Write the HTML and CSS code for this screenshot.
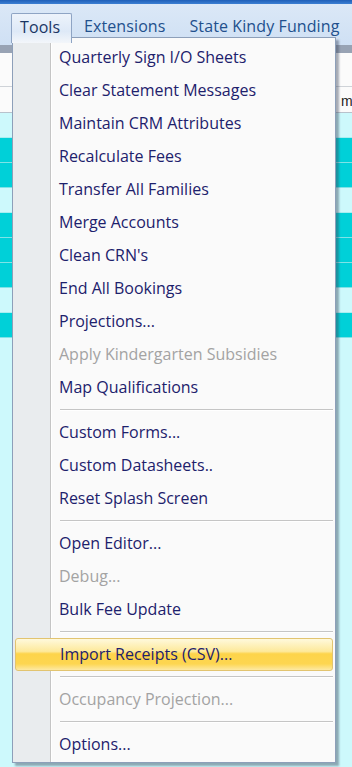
FILE: index.html
```html
<!DOCTYPE html>
<html>
<head>
<meta charset="utf-8">
<link rel="stylesheet" href="styles.css">
</head>
<body>
<div class="topbar"></div>
<div class="menubar">
  <div class="tab tab-active">Tools</div>
  <div class="tab">Extensions</div>
  <div class="tab">State Kindy Funding</div>
</div>
<div class="band"></div>
<div class="grid">
  <div class="row head1"></div>
  <div class="row head2"><span class="colhead">m</span></div>
  <div class="row light"></div>
  <div class="row cyan"></div>
  <div class="row cyan"></div>
  <div class="row light"></div>
  <div class="row cyan"></div>
  <div class="row cyan"></div>
  <div class="row cyan"></div>
  <div class="row light"></div>
  <div class="row cyan"></div>
</div>

<div class="menu">
  <div class="gutter"></div>
  <div class="items">
    <div class="item">Quarterly Sign I/O Sheets</div>
    <div class="item">Clear Statement Messages</div>
    <div class="item">Maintain CRM Attributes</div>
    <div class="item">Recalculate Fees</div>
    <div class="item">Transfer All Families</div>
    <div class="item">Merge Accounts</div>
    <div class="item">Clean CRN's</div>
    <div class="item">End All Bookings</div>
    <div class="item">Projections...</div>
    <div class="item disabled">Apply Kindergarten Subsidies</div>
    <div class="item">Map Qualifications</div>
    <div class="sep"></div>
    <div class="item">Custom Forms...</div>
    <div class="item">Custom Datasheets..</div>
    <div class="item">Reset Splash Screen</div>
    <div class="sep"></div>
    <div class="item">Open Editor...</div>
    <div class="item disabled">Debug...</div>
    <div class="item">Bulk Fee Update</div>
    <div class="sep"></div>
    <div class="item hover">Import Receipts (CSV)...</div>
    <div class="sep"></div>
    <div class="item disabled">Occupancy Projection...</div>
    <div class="sep"></div>
    <div class="item">Options...</div>
  </div>
</div>
</body>
</html>
```
FILE: styles.css
```css
html, body {
  margin: 0;
  padding: 0;
}
body {
  width: 352px;
  height: 767px;
  overflow: hidden;
  background: #cdf9fc;
  font-family: "Open Sans", "Noto Sans", sans-serif;
  position: relative;
}
.topbar {
  height: 4px;
  background: linear-gradient(#1f5fb8, #3b7fd3);
}
.menubar {
  height: 41px;
  background: linear-gradient(#dbe8f7, #cfe0f4);
  display: flex;
  align-items: flex-start;
  padding-left: 11px;
  box-sizing: border-box;
  padding-top: 5px;
}
.tab {
  font-size: 16px;
  color: #22508d;
  height: 31px;
  line-height: 35px;
  padding: 0 12px;
  box-sizing: border-box;
  letter-spacing: 0.1px;
}
.tab-active {
  position: relative;
  z-index: 3;
  color: #1a3563;
  border: 1px solid #8ea4c4;
  border-bottom: none;
  border-radius: 2px 2px 0 0;
  background: linear-gradient(#edf3fb, #dee9f7 60%, #f3f6fa);
  height: 30px;
  width: 61px;
  line-height: 26px;
  margin-top: 4px;
  padding-left: 8px;
  padding-right: 0;
}
.band {
  height: 8px;
  background: #98a3b4;
}
.grid {
  display: flex;
  flex-direction: column;
}
.row {
  height: 25px;
  box-sizing: border-box;
  border-bottom: 1px solid #a9eef1;
  position: relative;
}
.head1 {
  height: 34px;
  background: #fbfbfb;
  border-bottom: 1px solid #cfd3d8;
}
.head2 {
  height: 26px;
  background: #fbfbfb;
  border-bottom: 1px solid #b8c2cc;
}
.colhead {
  position: absolute;
  left: 341px;
  top: 6px;
  font-family: "Liberation Sans", sans-serif;
  font-size: 14px;
  color: #222;
}
.light { background: #cdf9fc; }
.cyan { background: #00d0d8; border-bottom-color: #7fe3e7; }

.menu {
  position: absolute;
  left: 12px;
  top: 37px;
  width: 324px;
  height: 726px;
  box-sizing: border-box;
  border: 1px solid #8d9fb9;
  background: #fafafa;
  box-shadow: 3px 3px 2px rgba(60, 70, 90, 0.45);
  z-index: 2;
  display: flex;
}
.gutter {
  position: absolute;
  left: 0;
  top: 0;
  bottom: 0;
  width: 37px;
  background: #e9ecee;
  border-right: 1px solid #c5c5c5;
  box-shadow: 1px 0 0 #ffffff;
}
.items {
  position: relative;
  flex: 1;
  padding-top: 3px;
  display: flex;
  flex-direction: column;
}
.item {
  height: 33px;
  line-height: 32px;
  padding-left: 46px;
  font-size: 16px;
  color: #1d216c;
  white-space: nowrap;
  box-sizing: border-box;
}
.item.disabled {
  color: #a3a3a3;
}
.item.hover {
  margin: 0 2px;
  padding-left: 44px;
  border: 1px solid #e2c470;
  border-radius: 3px;
  line-height: 31px;
  background: linear-gradient(#fff9dc 0%, #fde99a 40%, #fdd44a 48%, #fdd650 80%, #fde9a3 100%);
}
.sep {
  height: 12px;
  position: relative;
}
.sep::after {
  content: "";
  position: absolute;
  left: 47px;
  right: 2px;
  top: 5px;
  height: 1px;
  background: #c5c5c5;
  box-shadow: 0 1px 0 #ffffff;
}
```
